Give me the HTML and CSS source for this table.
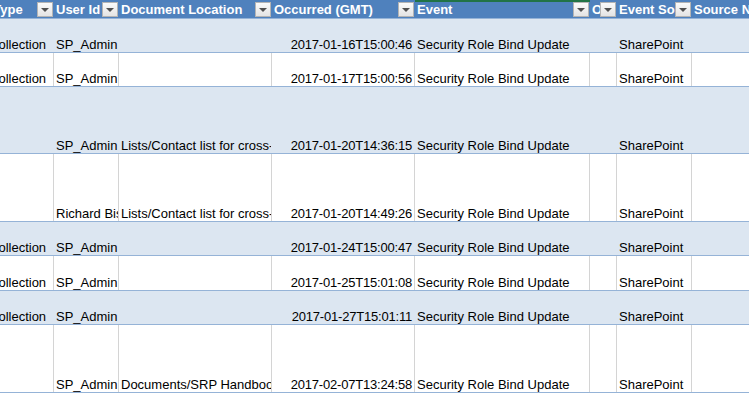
FILE: index.html
```html
<!DOCTYPE html>
<html>
<head>
<meta charset="utf-8">
<link rel="stylesheet" href="styles.css">
</head>
<body>
<div class="sheet">
  <div class="table">
    <div class="row head">
      <div class="hc"><span class="ht">Item Type</span><span class="fb"></span></div>
      <div class="hc"><span class="ht">User Id</span><span class="fb"></span></div>
      <div class="hc"><span class="ht">Document Location</span><span class="fb"></span></div>
      <div class="hc"><span class="ht">Occurred (GMT)</span><span class="fb"></span></div>
      <div class="hc sel"><span class="ht">Event</span><span class="fb"></span></div>
      <div class="hc"><span class="ht">Object</span><span class="fb"></span></div>
      <div class="hc"><span class="ht">Event Source</span><span class="fb"></span></div>
      <div class="hc"><span class="ht">Source Name</span><span class="fb"></span></div>
    </div>

    <div class="row band h34">
      <div class="c">Site Collection</div><div class="c">SP_Admin</div><div class="c"></div>
      <div class="c num">2017-01-16T15:00:46</div><div class="c">Security Role Bind Update</div>
      <div class="c"></div><div class="c">SharePoint</div><div class="c"></div>
    </div>
    <div class="row h34">
      <div class="c">Site Collection</div><div class="c">SP_Admin</div><div class="c"></div>
      <div class="c num">2017-01-17T15:00:56</div><div class="c">Security Role Bind Update</div>
      <div class="c"></div><div class="c">SharePoint</div><div class="c"></div>
    </div>
    <div class="row band h67">
      <div class="c">List</div><div class="c">SP_Admin</div><div class="c">Lists/Contact list for cross-site lookup</div>
      <div class="c num">2017-01-20T14:36:15</div><div class="c">Security Role Bind Update</div>
      <div class="c"></div><div class="c">SharePoint</div><div class="c"></div>
    </div>
    <div class="row h68">
      <div class="c">List</div><div class="c">Richard Bishop</div><div class="c">Lists/Contact list for cross-site lookup</div>
      <div class="c num">2017-01-20T14:49:26</div><div class="c">Security Role Bind Update</div>
      <div class="c"></div><div class="c">SharePoint</div><div class="c"></div>
    </div>
    <div class="row band h34">
      <div class="c">Site Collection</div><div class="c">SP_Admin</div><div class="c"></div>
      <div class="c num">2017-01-24T15:00:47</div><div class="c">Security Role Bind Update</div>
      <div class="c"></div><div class="c">SharePoint</div><div class="c"></div>
    </div>
    <div class="row h35">
      <div class="c">Site Collection</div><div class="c">SP_Admin</div><div class="c"></div>
      <div class="c num">2017-01-25T15:01:08</div><div class="c">Security Role Bind Update</div>
      <div class="c"></div><div class="c">SharePoint</div><div class="c"></div>
    </div>
    <div class="row band h34">
      <div class="c">Site Collection</div><div class="c">SP_Admin</div><div class="c"></div>
      <div class="c num">2017-01-27T15:01:11</div><div class="c">Security Role Bind Update</div>
      <div class="c"></div><div class="c">SharePoint</div><div class="c"></div>
    </div>
    <div class="row h68">
      <div class="c">File</div><div class="c">SP_Admin</div><div class="c">Documents/SRP Handbook.docx</div>
      <div class="c num">2017-02-07T13:24:58</div><div class="c">Security Role Bind Update</div>
      <div class="c"></div><div class="c">SharePoint</div><div class="c"></div>
    </div>
  </div>
</div>
</body>
</html>
```

FILE: styles.css
```css
html, body {
  margin: 0;
  padding: 0;
  background: #ffffff;
}

body {
  font-family: "Liberation Sans", Arial, sans-serif;
  font-size: 13px;
  color: #000000;
}

.sheet {
  width: 749px;
  height: 393px;
  overflow: hidden;
  background: #ffffff;
}

.table {
  margin-left: -39px;
  width: max-content;
}

.row {
  display: grid;
  grid-template-columns: 93px 65px 153px 143px 175px 27px 75px 140px;
  border-bottom: 1px solid #95B3D7;
  box-sizing: border-box;
}

.head {
  height: 19px;
  background: #4F81BD;
}

.hc {
  display: flex;
  align-items: center;
  min-width: 0;
  overflow: hidden;
  padding-left: 2px;
  color: #ffffff;
  font-weight: bold;
  line-height: 15px;
}

.hc.sel {
  box-shadow: inset 0 2px 0 #217346;
}

.ht {
  flex: 1;
  min-width: 0;
  overflow: hidden;
  white-space: nowrap;
}

.fb {
  flex: none;
  width: 16px;
  height: 15px;
  margin-right: 1px;
  margin-top: 1px;
  box-sizing: border-box;
  border: 1px solid #B4B4B4;
  background: linear-gradient(#FAFAFA, #E4E4E4);
  display: flex;
  align-items: center;
  justify-content: center;
}

.fb::after {
  content: "";
  width: 0;
  height: 0;
  border-left: 4px solid transparent;
  border-right: 4px solid transparent;
  border-top: 4px solid #505050;
}

.h34 { height: 34px; }
.h35 { height: 35px; }
.h67 { height: 67px; }
.h68 { height: 68px; }

.band {
  background: #DCE6F1;
}

.c {
  display: flex;
  align-items: flex-end;
  min-width: 0;
  overflow: hidden;
  white-space: nowrap;
  padding: 0 2px;
  line-height: 15px;
  border-right: 1px solid #D4D4D4;
}

.band .c {
  border-right-color: transparent;
}

.c.num {
  justify-content: flex-end;
  letter-spacing: -0.2px;
}
```
